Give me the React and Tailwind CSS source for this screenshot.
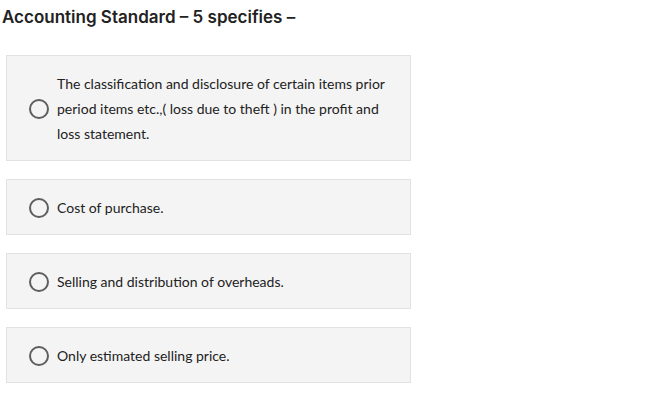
import React from 'react';

const options = [
    'The classification and disclosure of certain items prior period items etc.,( loss due to theft ) in the profit and loss statement.',
    'Cost of purchase.',
    'Selling and distribution of overheads.',
    'Only estimated selling price.',
];

const App = () => {
    return (
        <div className="min-h-screen bg-white pt-[5px]">
            <h2 className="pl-[2px] text-[17px] font-semibold leading-[24px] text-[#222] font-['Inter',sans-serif]">
                Accounting Standard – 5 specifies –
            </h2>
            <div className="mt-[26px] flex w-[405px] flex-col gap-[18px] pl-[6px] box-content">
                {options.map((text, idx) => (
                    <label
                        key={idx}
                        className="flex items-center border border-[#e2e2e2] bg-[#f4f4f4] pt-[15px] pb-[14px] pl-[22px] pr-[20px] cursor-pointer"
                    >
                        <span className="mr-[8px] h-[20px] w-[20px] flex-shrink-0 rounded-full border-2 border-[#5e5e5e]" />
                        <span className="text-[14px] leading-[25px] text-[#222] font-['Lato',sans-serif]">{text}</span>
                    </label>
                ))}
            </div>
        </div>
    );
};

export default App;
